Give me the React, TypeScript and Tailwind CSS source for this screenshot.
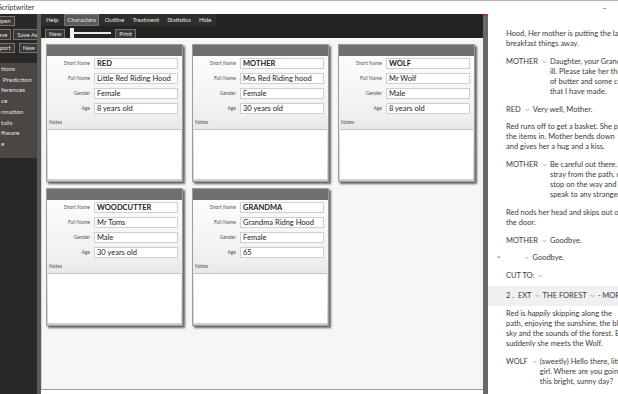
import React from 'react';

const ui = "font-['Lato','Liberation_Sans',sans-serif]";

type Character = {
  short: string;
  full: string;
  gender: string;
  age: string;
};

const characters: Character[] = [
  { short: 'RED', full: 'Little Red Riding Hood', gender: 'Female', age: '8 years old' },
  { short: 'MOTHER', full: 'Mrs Red Riding hood', gender: 'Female', age: '30 years old' },
  { short: 'WOLF', full: 'Mr Wolf', gender: 'Male', age: '8 years old' },
  { short: 'WOODCUTTER', full: 'Mr Toms', gender: 'Male', age: '30 years old' },
  { short: 'GRANDMA', full: 'Grandma Ridng Hood', gender: 'Female', age: '65' },
];

function Chevron() {
  return (
    <svg width="5" height="4" viewBox="0 0 5 4" className="block shrink-0">
      <path d="M0.8 1 L2.5 2.8 L4.2 1" fill="none" stroke="#9a9a9a" strokeWidth="0.8" />
    </svg>
  );
}

function DarkButton({ children, className = '' }: { children: React.ReactNode; className?: string }) {
  return (
    <div
      className={`h-[10px] px-[3px] flex items-center whitespace-nowrap border border-[#77736f] bg-[#3b3835] text-[6px] leading-none text-[#e2e2e2] ${className}`}
    >
      {children}
    </div>
  );
}

function Field({ label, value, bold }: { label: string; value: string; bold?: boolean }) {
  return (
    <div className="flex items-center h-[11px]">
      <div className="w-[43px] text-right text-[5px] leading-none text-[#555]">{label}</div>
      <div
        className={`ml-[4px] w-[84px] h-[11px] bg-white border border-[#cfcfcf] px-[2px] flex items-center text-[7.5px] leading-none text-[#222] whitespace-nowrap overflow-hidden ${bold ? 'font-bold' : ''}`}
      >
        {value}
      </div>
    </div>
  );
}

function CharacterCard({ c }: { c: Character }) {
  return (
    <div className="w-[137px] h-[138px] flex flex-col border border-[#9c9c9c] bg-gradient-to-b from-white via-[#f0f0f0] to-[#cfcfcf] shadow-[2px_2px_2px_rgba(0,0,0,0.6)]">
      <div className="h-[11px] shrink-0 bg-[#707070]" />
      <div className="flex flex-col gap-[4px] pt-[2px]">
        <Field label="Short Name" value={c.short} bold />
        <Field label="Full Name" value={c.full} />
        <Field label="Gender" value={c.gender} />
        <Field label="Age" value={c.age} />
      </div>
      <div className="pl-[2px] pt-[6px] text-[5px] leading-none text-[#555]">Notes</div>
      <div className="mt-[4px] mx-[1px] mb-[2px] flex-1 bg-white border-t border-[#c4c4c4]" />
    </div>
  );
}

function Line({ children }: { children: React.ReactNode }) {
  return <div className="whitespace-nowrap h-[10.1px] leading-[10.1px]">{children}</div>;
}

function Dialogue({ name, lines }: { name: string; lines: string[] }) {
  return (
    <div className="flex mb-[7.5px]">
      <div className="flex items-center h-[10.1px] shrink-0">
        <span>{name}</span>
        <span className="ml-[4px]">
          <Chevron />
        </span>
      </div>
      <div className="ml-[3px]">
        {lines.map((l) => (
          <Line key={l}>{l}</Line>
        ))}
      </div>
    </div>
  );
}

function Action({ lines }: { lines: React.ReactNode[] }) {
  return (
    <div className="mb-[7.5px]">
      {lines.map((l, i) => (
        <Line key={i}>{l}</Line>
      ))}
    </div>
  );
}

export default function App() {
  const tabs = ['Help', 'Characters', 'Outline', 'Treatment', 'Statistics', 'Hide'];
  const menu = ['tions', ' Prediction', 'ferences', 'ce', 'rmation', 'tails', 'ftware', 'e'];

  return (
    <div className={`w-[618px] h-[394px] overflow-hidden bg-white flex flex-col ${ui}`}>
      {/* title bar */}
      <div className="h-[14px] shrink-0 flex items-center justify-between border-t border-[#b5b5b5]">
        <span className="-ml-[2px] text-[7px] text-[#333]">Scriptwriter</span>
        <span className="mr-[11px] text-[8px] text-[#444] leading-none">–</span>
      </div>

      <div className="flex flex-1 min-h-0">
        {/* sidebar */}
        <div className="w-[37px] shrink-0 flex flex-col bg-[#2b2927] overflow-hidden">
          <div className="h-[49px] shrink-0 pt-[2px] flex flex-col">
            <div className="flex -ml-[8px]">
              <DarkButton className="h-[10px]">Open</DarkButton>
            </div>
            <div className="flex gap-[2px] -ml-[9px] mt-[3px]">
              <DarkButton className="h-[11px] px-[2px]">Save</DarkButton>
              <DarkButton className="h-[11px] px-[2px]">Save As</DarkButton>
            </div>
            <div className="flex gap-[4px] -ml-[11px] mt-[3px]">
              <DarkButton className="px-[2px]">Import</DarkButton>
              <DarkButton className="px-[2px]">New</DarkButton>
            </div>
          </div>
          <div className="h-[95px] shrink-0 bg-[#4a4643] pt-[1px]">
            {menu.map((m) => (
              <div key={m} className="h-[10.7px] flex items-center pl-[1px] text-[6.5px] text-[#e0e0e0] whitespace-pre leading-none">
                {m}
              </div>
            ))}
          </div>
          <div className="flex-1" />
        </div>

        <div className="w-[4px] shrink-0 bg-[#5e5b58]" />

        {/* main panel */}
        <div className="w-[442px] shrink-0 flex flex-col">
          <div className="h-[12px] shrink-0 flex bg-[#252321]">
            <div className="flex items-stretch bg-[#302e2c] pl-[3px] pr-[3px] gap-[4px]">
              {tabs.map((t) => (
                <div
                  key={t}
                  className={`flex items-center px-[2px] text-[6px] leading-none text-[#e4e4e4] ${t === 'Characters' ? 'bg-[#5c5a58] border border-[#77736f]' : ''}`}
                >
                  {t}
                </div>
              ))}
            </div>
          </div>
          <div className="h-[12px] shrink-0 flex items-center bg-[#252321] pl-[4px]">
            <DarkButton className="h-[9px] mt-[3px] px-[2px]">New</DarkButton>
            <div className="ml-[5px] mt-[1px] flex items-center">
              <div className="w-[4px] h-[10px] bg-[#f2f2f2]" />
              <div className="w-[37px] h-[2px] bg-[#e8e8e8]" />
            </div>
            <DarkButton className="ml-[4px] h-[9px] mt-[3px] px-[2px]">Print</DarkButton>
          </div>
          <div className="flex-1 min-h-0 bg-[#f6f6f6] border-l border-[#cfcfcf] border-b border-b-[#9a9a9a] mb-[4px] pl-[4px] pt-[6px]">
            <div className="grid grid-cols-[137px_137px_137px] gap-x-[9px] gap-y-[6px]">
              {characters.map((c) => (
                <CharacterCard key={c.short} c={c} />
              ))}
            </div>
          </div>
        </div>

        <div className="w-[5px] shrink-0 bg-[#6a6866] border-t-2 border-t-[#d8262b]" />

        {/* script */}
        <div className="flex-1 min-w-0 overflow-hidden bg-white pt-[15px] text-[7.5px] leading-[10.1px] text-[#3a3a3a]">
          <div className="pl-[18px]">
            <Action lines={['Hood, Her mother is putting the last of the', 'breakfast things away.']} />
            <Dialogue
              name="MOTHER"
              lines={['Daughter, your Grandma is', 'ill. Please take her this pot', 'of butter and some cup cakes', 'that I have made.']}
            />
            <Dialogue name="RED" lines={['Very well, Mother.']} />
            <Action
              lines={['Red runs off to get a basket. She puts all', 'the items in. Mother bends down', 'and gives her a hug and a kiss.']}
            />
            <Dialogue
              name="MOTHER"
              lines={['Be careful out there. Don\u2019t', 'stray from the path, don\u2019t', 'stop on the way and don\u2019t', 'speak to any strangers.']}
            />
            <Action lines={['Red nods her head and skips out of', 'the door.']} />
            <Dialogue name="MOTHER" lines={['Goodbye.']} />
          </div>
          <div className="flex items-center h-[10.1px] mb-[7.5px] pl-[9px]">
            <span className="text-[6px]">^</span>
            <span className="ml-[24px]">
              <Chevron />
            </span>
            <span className="ml-[3px]">Goodbye.</span>
          </div>
          <div className="pl-[18px] flex items-center h-[10.1px]">
            <span>CUT TO:</span>
            <span className="ml-[3px]">
              <Chevron />
            </span>
          </div>
          <div className="mt-[5px] h-[20px] bg-[#f0f0f0] pl-[18px] flex items-center whitespace-nowrap">
            <span>2 .&nbsp; EXT</span>
            <span className="mx-[3px]">
              <Chevron />
            </span>
            <span>THE FOREST</span>
            <span className="mx-[3px]">
              <Chevron />
            </span>
            <span>- MORNING</span>
          </div>
          <div className="pl-[18px] mt-[3px]">
            <Action
              lines={[
                <>
                  Red is <i>happily</i> skipping along the
                </>,
                'path, enjoying the sunshine, the blue',
                'sky and the sounds of the forest. But',
                'suddenly she meets the Wolf.',
              ]}
            />
            <Dialogue name="WOLF" lines={['(sweetly) Hello there, little', 'girl. Where are you going', 'this bright, sunny day?']} />
          </div>
        </div>
      </div>
    </div>
  );
}
